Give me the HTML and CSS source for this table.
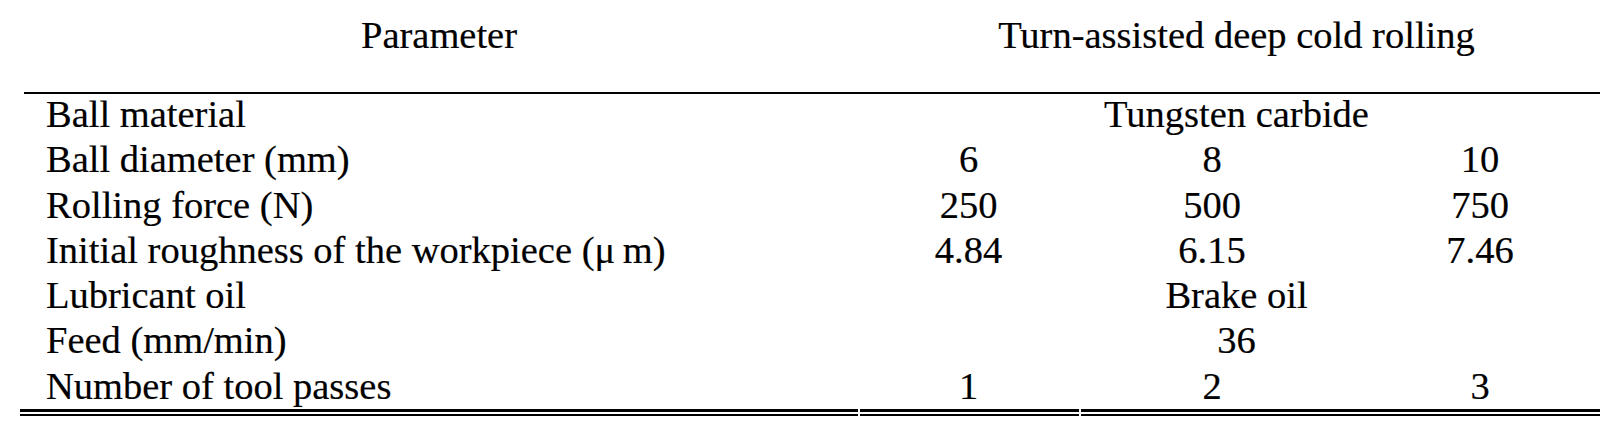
FILE: index.html
```html
<!DOCTYPE html>
<html lang="en">
<head>
<meta charset="utf-8">
<title>Turn-assisted deep cold rolling parameters</title>
<link rel="stylesheet" href="styles.css">
</head>
<body>
<table class="params">
  <colgroup>
    <col class="c-param">
    <col class="c-v1">
    <col class="c-v2">
    <col class="c-v3">
  </colgroup>
  <thead>
    <tr class="head">
      <th class="first">Parameter</th>
      <th colspan="3">Turn-assisted deep cold rolling</th>
    </tr>
  </thead>
  <tbody>
    <tr>
      <td class="name">Ball material</td>
      <td colspan="3">Tungsten carbide</td>
    </tr>
    <tr>
      <td class="name">Ball diameter (mm)</td>
      <td>6</td><td>8</td><td>10</td>
    </tr>
    <tr>
      <td class="name">Rolling force (N)</td>
      <td>250</td><td>500</td><td>750</td>
    </tr>
    <tr>
      <td class="name">Initial roughness of the workpiece (μ&#8201;m)</td>
      <td>4.84</td><td>6.15</td><td>7.46</td>
    </tr>
    <tr>
      <td class="name">Lubricant oil</td>
      <td colspan="3">Brake oil</td>
    </tr>
    <tr>
      <td class="name">Feed (mm/min)</td>
      <td colspan="3">36</td>
    </tr>
    <tr class="last">
      <td class="name">Number of tool passes</td>
      <td class="gap">1</td><td class="gap">2</td><td class="join">3</td>
    </tr>
  </tbody>
</table>
</body>
</html>
```

FILE: styles.css
```css
html, body {
  margin: 0;
  padding: 0;
  background: #fff;
  overflow: hidden;
}

body {
  width: 1600px;
  height: 422px;
  color: #000;
  font-family: "Liberation Serif", "Times New Roman", serif;
}

.params {
  margin-left: 20px;
  width: 1595px;
  table-layout: fixed;
  border-collapse: collapse;
  border-spacing: 0;
  font-size: 38.5px;
  line-height: 40px;
  -webkit-text-stroke: 0.2px #000;
}

.c-param { width: 838px; }
.c-v1 { width: 221px; }
.c-v2 { width: 266px; }
.c-v3 { width: 270px; }

.params th,
.params td {
  padding: 0 0 5.3px;
  font-weight: normal;
  text-align: center;
  white-space: nowrap;
  vertical-align: top;
}

/* header row with the single top rule */
.head th {
  padding-top: 14.5px;
  padding-bottom: 39.5px;
  background: linear-gradient(#000, #000) left 0 bottom 0 / 100% 2px no-repeat;
}

.head th.first {
  background: linear-gradient(#000, #000) left 4px bottom 0 / calc(100% - 4px) 2px no-repeat;
}

.params td.name {
  text-align: left;
  padding-left: 26px;
}

/* closing double rule */
.last td {
  padding-bottom: 10.2px;
  background:
    linear-gradient(#000, #000) left 0 bottom 4px / 100% 3px no-repeat,
    linear-gradient(#000, #000) left 0 bottom 0 / 100% 2px no-repeat;
}

.last td.gap,
.last td.join {
  background:
    linear-gradient(#000, #000) left 2px bottom 4px / calc(100% - 2px) 3px no-repeat,
    linear-gradient(#000, #000) left 2px bottom 0 / calc(100% - 2px) 2px no-repeat;
}

.last td.join {
  background:
    linear-gradient(#000, #000) left 0 bottom 4px / 100% 3px no-repeat,
    linear-gradient(#000, #000) left 0 bottom 0 / 100% 2px no-repeat;
}
```
